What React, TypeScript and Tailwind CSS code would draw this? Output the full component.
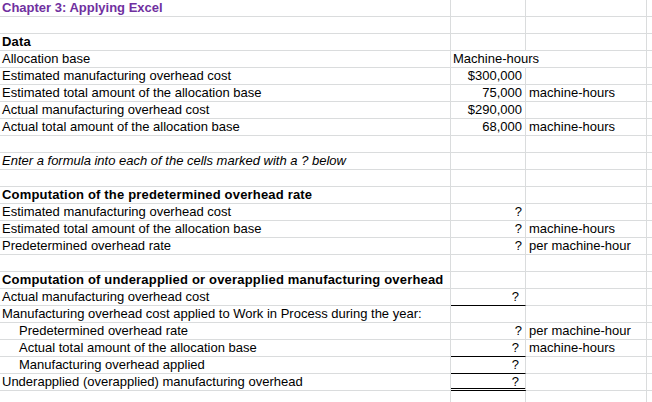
import React from 'react'

type Row = {
    a?: string
    kind?: 'title' | 'bold' | 'italic' | 'indent'
    b?: string
    bLeft?: boolean
    bPad?: 'near' | 'far'
    c?: string
    line?: 'single' | 'double'
}

const rows: Row[] = [
    { a: 'Chapter 3: Applying Excel', kind: 'title' },
    {},
    { a: 'Data', kind: 'bold' },
    { a: 'Allocation base', b: 'Machine-hours', bLeft: true },
    { a: 'Estimated manufacturing overhead cost', b: '$300,000' },
    { a: 'Estimated total amount of the allocation base', b: '75,000', c: 'machine-hours' },
    { a: 'Actual manufacturing overhead cost', b: '$290,000' },
    { a: 'Actual total amount of the allocation base', b: '68,000', c: 'machine-hours' },
    {},
    { a: 'Enter a formula into each of the cells marked with a ? below', kind: 'italic' },
    {},
    { a: 'Computation of the predetermined overhead rate', kind: 'bold' },
    { a: 'Estimated manufacturing overhead cost', b: '?' },
    { a: 'Estimated total amount of the allocation base', b: '?', c: 'machine-hours' },
    { a: 'Predetermined overhead rate', b: '?', c: 'per machine-hour' },
    {},
    { a: 'Computation of underapplied or overapplied manufacturing overhead', kind: 'bold' },
    { a: 'Actual manufacturing overhead cost', b: '?', bPad: 'far', line: 'single' },
    { a: 'Manufacturing overhead cost applied to Work in Process during the year:' },
    { a: 'Predetermined overhead rate', kind: 'indent', b: '?', c: 'per machine-hour' },
    { a: 'Actual total amount of the allocation base', kind: 'indent', b: '?', bPad: 'far', c: 'machine-hours', line: 'single' },
    { a: 'Manufacturing overhead applied', kind: 'indent', b: '?', bPad: 'far', line: 'single' },
    { a: 'Underapplied (overapplied) manufacturing overhead', b: '?', bPad: 'far', line: 'double' },
    {},
]

function labelClass(kind?: Row['kind']) {
    switch (kind) {
        case 'title':
            return 'font-bold text-[#7030a0] pl-[2px]'
        case 'bold':
            return 'font-bold tracking-[0.18px] pl-[2px]'
        case 'italic':
            return 'italic pl-[2px]'
        case 'indent':
            return 'pl-[19px]'
        default:
            return 'pl-[2px]'
    }
}

export default function App() {
    return (
        <div className="w-[652px] h-[402px] overflow-hidden bg-white text-black text-[13px] leading-[16px] font-['Liberation_Sans',Arial,sans-serif]">
            <div className="grid grid-cols-[451px_75px_121px_1fr]">
                {rows.map((r, i) => (
                    <React.Fragment key={i}>
                        {/* column A - labels overflow freely */}
                        <div className={`h-[17px] border-b border-r border-[#dadcdd] whitespace-nowrap ${labelClass(r.kind)}`}>
                            {r.a}
                        </div>

                        {/* column B - values; left-aligned text spills into C, gridline hidden */}
                        <div
                            className={[
                                'h-[17px] border-r whitespace-nowrap',
                                r.bLeft ? 'border-r-transparent pl-[2px]' : 'border-r-[#dadcdd] text-right',
                                r.line === 'single' && 'border-b border-b-black',
                                r.line === 'double' && 'border-b-[3px] border-double border-b-black',
                                !r.line && 'border-b border-b-[#dadcdd]',
                                !r.bLeft && (r.bPad === 'far' ? 'pr-[6px]' : 'pr-[3px]'),
                            ]
                                .filter(Boolean)
                                .join(' ')}
                        >
                            {r.b}
                        </div>

                        {/* column C - units */}
                        <div className="h-[17px] border-b border-r border-[#dadcdd] pl-[3px] whitespace-nowrap">
                            {r.c}
                        </div>

                        {/* column D */}
                        <div className="h-[17px] border-b border-[#dadcdd]" />
                    </React.Fragment>
                ))}
            </div>
        </div>
    )
}
